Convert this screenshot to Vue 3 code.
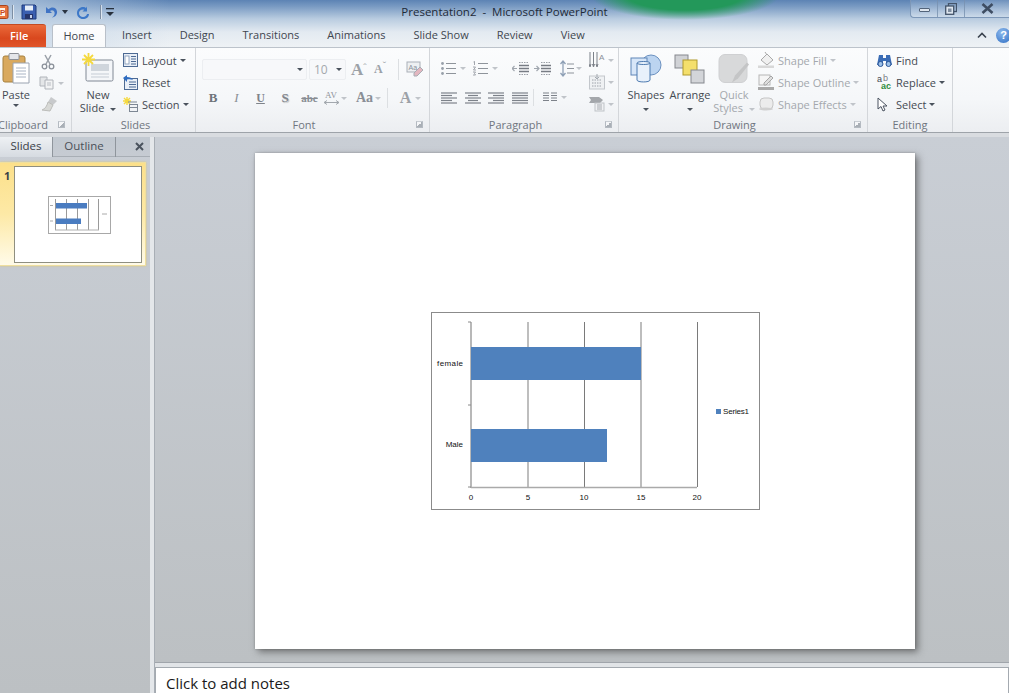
<script setup>
const tabs = ['Insert', 'Design', 'Transitions', 'Animations', 'Slide Show', 'Review', 'View']
const fontBtns = [
  { t: 'B', c: 'bold', w: 24 },
  { t: 'I', c: 'ital', w: 23 },
  { t: 'U', c: 'und', w: 25 },
  { t: 'S', c: 'shad', w: 24 },
  { t: 'abc', c: 'strike', w: 25 }
]
const alignRows = [
  [[0, 16], [0, 11], [0, 16], [0, 11], [0, 16]],
  [[0, 16], [3, 10], [0, 16], [3, 10], [0, 16]],
  [[0, 16], [5, 11], [0, 16], [5, 11], [0, 16]],
  [[0, 16], [0, 16], [0, 16], [0, 16], [0, 16]]
]
</script>

<template>
  <div class="app">
    <header class="chrome">
      <div class="titlebar">
        <div class="qat">
          <svg class="app-logo" width="9" height="14" viewBox="0 0 9 14"><rect x="-5" y="0.5" width="13" height="13" rx="1.5" fill="#e8743c" stroke="#a8441c"/><rect x="-3" y="3" width="8" height="8" fill="#fff3e4"/><text x="0" y="10" font-size="8" font-weight="700" fill="#c8481a" font-family="Liberation Sans">P</text></svg>
          <span class="qsep first"></span>
          <svg class="q-save" width="16" height="16" viewBox="0 0 16 16"><path d="M1 1h13l1 1v13H1z" fill="#3b5fb0" stroke="#1f3a7c"/><rect x="4" y="1.5" width="8" height="5" fill="#e6edf7"/><rect x="4" y="10" width="8" height="5" fill="#27356a"/><rect x="9" y="11" width="2" height="3" fill="#c6d2ea"/></svg>
          <svg class="q-undo" width="14" height="14" viewBox="0 0 14 14"><path d="M2 2v6h6L6 6c2-1.400 4-.6 4.600 1.400.4 1.800-.6 3.800-2.600 5.100 3.400-.6 5.400-3 5-6C12.500 2.500 8 1 4.500 4.200z" fill="#3f73c4"/></svg>
          <span class="q-caret"></span>
          <svg class="q-redo" width="14" height="14" viewBox="0 0 14 14"><path d="M11 1.500v5H6.500l1.800-1.800C5.500 3.800 3 5.500 3 8s2 4 4 4 4-1.500 4-3h2c0 3-2.600 5-6 5s-6-2.500-6-6 3-6 6-6c1.500 0 2.600.6 3 1z" fill="#3d78c8"/></svg>
          <span class="qsep"></span>
          <svg class="q-cust" width="8" height="10" viewBox="0 0 8 10"><rect y="1" width="8" height="1.300" fill="#27303c"/><path d="M0 5h8L4 9z" fill="#27303c"/></svg>
        </div>
        <div class="doc-title">Presentation2&nbsp; -&nbsp; Microsoft PowerPoint</div>
        <div class="win-btns">
          <span class="win-btn w-min"><i class="min-bar"></i></span>
          <span class="win-btn w-res">
            <svg width="12" height="12" viewBox="0 0 12 12"><rect x="3.500" y="0.500" width="8" height="8" fill="none" stroke="#43546a" stroke-width="1.300"/><rect x="0.700" y="3" width="8" height="8.300" fill="#dde5ee" stroke="#43546a" stroke-width="1.300"/><rect x="3" y="5.500" width="3.500" height="3.500" fill="#7e8da0"/></svg>
          </span>
          <span class="win-btn w-close">
            <svg width="13" height="11" viewBox="0 0 13 11"><path d="M1.500 1l10 9M11.500 1l-10 9" stroke="#3e4d62" stroke-width="2.600"/></svg>
          </span>
        </div>
      </div>
      <nav class="tabrow">
        <span class="file-tab">File</span>
        <span class="tab home">Home</span>
        <span v-for="t in tabs" :key="t" class="tab">{{ t }}</span>
        <span class="tab-right">
          <svg width="10" height="7" viewBox="0 0 10 7"><path d="M1 5.500l4-4 4 4" fill="none" stroke="#39424e" stroke-width="1.600"/></svg>
          <span class="help">?</span>
        </span>
      </nav>
    </header>

    <section class="ribbon">
      <!-- Clipboard -->
      <div class="group g-clip">
        <div class="g-body">
          <div class="big paste">
            <svg width="28" height="32" viewBox="0 0 28 32"><rect x="1" y="3" width="22" height="26" rx="2" fill="#d9a95e" stroke="#a7813f"/><rect x="7" y="0.500" width="10" height="6" rx="1" fill="#e4e6ea" stroke="#8b8f96"/><path d="M11 10h16v20H11z" fill="#fff" stroke="#9aa3b0"/><path d="M14 15h10M14 18h10M14 21h10M14 24h10" stroke="#a9b4c4"/></svg>
            <span class="big-label">Paste</span>
            <span class="caret solo"></span>
          </div>
          <div class="clip-tools">
            <svg width="14" height="16" viewBox="0 0 14 16"><path d="M4 1l5 9M10 1L5 10" stroke="#9aa0a8" stroke-width="1.500"/><circle cx="3.500" cy="12.500" r="2.300" fill="none" stroke="#8a9099" stroke-width="1.300"/><circle cx="10.500" cy="12.500" r="2.300" fill="none" stroke="#8a9099" stroke-width="1.300"/></svg>
            <span class="copy-row">
              <svg width="16" height="14" viewBox="0 0 16 14"><path d="M1 1h7v9H1z" fill="#e4e6e8" stroke="#b0b4ba"/><path d="M6 4h8v9H6z" fill="#f2f3f4" stroke="#b0b4ba"/><path d="M8 7h4M8 9h4" stroke="#b9bdc3"/></svg>
              <span class="caret pale"></span>
            </span>
            <svg width="17" height="16" viewBox="0 0 17 16"><path d="M10 1l6 4-4 4-5-3z" fill="#c8cacc"/><path d="M7 6l5 3-3 6-8-1c3-1 5-4 6-8z" fill="#d8d9d6" stroke="#bcbdba"/></svg>
          </div>
        </div>
        <div class="g-label clip-label"><span>Clipboard</span><i class="launcher"></i></div>
      </div>

      <!-- Slides -->
      <div class="group g-slides">
        <div class="g-body">
          <div class="big newslide">
            <svg width="32" height="32" viewBox="0 0 32 32"><rect x="4" y="7" width="27" height="21" rx="1.500" fill="#f4f6f9" stroke="#808894"/><rect x="9" y="11" width="18" height="7" fill="#cfd5dc"/><path d="M9 21h18M9 24h18" stroke="#c5ccd5"/><path d="M6.500 0v13M0 6.500h13M2 2l9 9M11 2l-9 9" stroke="#f5d93e" stroke-width="1.800"/></svg>
            <span class="big-label">New<br>Slide <i class="caret"></i></span>
          </div>
          <div class="small-col">
            <div class="sm">
              <svg width="15" height="14" viewBox="0 0 15 14"><rect x="0.500" y="0.500" width="14" height="13" fill="#e9eff7" stroke="#4d6a94"/><rect x="2" y="3" width="4" height="8" fill="#fff" stroke="#7e95b5" stroke-width=".8"/><path d="M8 3.500h5M8 6h5M8 8.500h5M8 11h5" stroke="#4d6a94"/></svg>
              <span>Layout</span><i class="caret"></i>
            </div>
            <div class="sm">
              <svg width="15" height="15" viewBox="0 0 15 15"><rect x="1.500" y="3.500" width="13" height="11" fill="#e9eff7" stroke="#4d6a94"/><path d="M6 7h7M6 9.500h7M6 12h7" stroke="#4d6a94"/><path d="M0 3l4-3v2c3 0 5 1 6 3-2-1-4-1-6-.5V7z" fill="#2f6cc0"/></svg>
              <span>Reset</span>
            </div>
            <div class="sm">
              <svg width="15" height="15" viewBox="0 0 15 15"><path d="M4 0v8M0 4h8M1 1l6 6M7 1L1 7" stroke="#f5d93e" stroke-width="1.400"/><path d="M5 5h9" stroke="#7d8794"/><rect x="6.500" y="7.500" width="8" height="7" fill="#f1f3f6" stroke="#7d8794"/><path d="M7 10.500h7" stroke="#7d8794"/></svg>
              <span>Section</span><i class="caret"></i>
            </div>
          </div>
        </div>
        <div class="g-label l-slides">Slides</div>
      </div>

      <!-- Font -->
      <div class="group g-font">
        <div class="g-body column">
          <div class="font-r1">
            <span class="combo fname"><i class="caret dark"></i></span>
            <span class="combo fsize"><em>10</em><i class="caret dark"></i></span>
            <span class="glyph grow">A<sup>ˆ</sup></span>
            <span class="glyph shrink">A<sup>ˇ</sup></span>
            <span class="vsep"></span>
            <svg class="clearfmt" width="18" height="17" viewBox="0 0 18 17"><rect x="1" y="1" width="13" height="10" fill="#eef0f2" stroke="#aab0b8"/><text x="2.500" y="8.500" font-size="7" fill="#8a909a" font-family="Liberation Sans">Aa</text><path d="M8 12l6-6 3 3-6 6H8z" fill="#e3b7c0" stroke="#a8adb4"/></svg>
          </div>
          <div class="font-r2">
            <span v-for="b in fontBtns" :key="b.t" class="fbtn" :class="b.c" :style="{ width: b.w + 'px' }">{{ b.t }}</span>
            <span class="av">AV<svg width="15" height="5" viewBox="0 0 15 5"><path d="M0 2.500h15M3 .5L0 2.500l3 2M12 .5l3 2-3 2" fill="none" stroke="#a3a8ae"/></svg></span>
            <i class="caret pale av-caret"></i>
            <span class="fbtn aa">Aa</span>
            <i class="caret pale"></i>
            <span class="vsep short"></span>
            <span class="fbtn colorA">A</span>
            <i class="caret pale"></i>
          </div>
        </div>
        <div class="g-label with-launcher">Font<i class="launcher abs"></i></div>
      </div>

      <!-- Paragraph -->
      <div class="group g-para">
        <div class="g-body para-body">
          <div class="para-main">
            <div class="para-r1">
              <svg class="pi" width="15" height="15" viewBox="0 0 15 15"><path d="M5 2.500h10M5 7.500h10M5 12.500h10" stroke="#8e949b" stroke-width="1.200"/><circle cx="1.500" cy="2.500" r="1.400" fill="#98a0aa"/><circle cx="1.500" cy="7.500" r="1.400" fill="#98a0aa"/><circle cx="1.500" cy="12.500" r="1.400" fill="#98a0aa"/></svg>
              <i class="caret pale c1"></i>
              <svg class="pi p2" width="15" height="15" viewBox="0 0 15 15"><path d="M5 2.500h10M5 7.500h10M5 12.500h10" stroke="#8e949b" stroke-width="1.200"/><path d="M0.500 1l1-.6v3.600M0 6h2.500l-2 3h2.500M0 11h2.500l-1 1.500 1 1.500H0" fill="none" stroke="#8b9199" stroke-width=".8"/></svg>
              <i class="caret pale c1"></i>
              <svg class="pi p3" width="17" height="15" viewBox="0 0 17 15"><path d="M7 1.500h10M7 13.500h10" stroke="#9a9fa6" stroke-dasharray="1.500 1"/><path d="M7 4.500h10M7 7.500h10M7 10.500h10" stroke="#777c84" stroke-width="1.300"/><path d="M5 7.500H0M2.500 5L0 7.500 2.500 10" fill="none" stroke="#a0a6ae" stroke-width="1.200"/></svg>
              <svg class="pi p4" width="17" height="15" viewBox="0 0 17 15"><path d="M7 1.500h10M7 13.500h10" stroke="#9a9fa6" stroke-dasharray="1.500 1"/><path d="M7 4.500h10M7 7.500h10M7 10.500h10" stroke="#777c84" stroke-width="1.300"/><path d="M0 7.500h5M2.500 5L5 7.500 2.500 10" fill="none" stroke="#a0a6ae" stroke-width="1.200"/></svg>
              <svg class="pi p5" width="14" height="17" viewBox="0 0 14 17"><path d="M3 1v15M0.500 4L3 1l2.500 3M0.500 13L3 16l2.500-3" fill="none" stroke="#8fa0b6" stroke-width="1.300"/><path d="M7 4h7M7 8.500h7M7 13h7" stroke="#8e949b" stroke-width="1.200"/></svg>
              <i class="caret pale c2"></i>
            </div>
            <div class="para-r2">
              <svg v-for="(r, i) in alignRows" :key="i" class="al" width="16" height="12" viewBox="0 0 16 12">
                <path v-for="(s, j) in r" :key="j" :d="`M${s[0]} ${1 + j * 2.500}h${s[1]}`" stroke="#7d828a" stroke-width="1.200"/>
              </svg>
              <span class="vsep shorter"></span>
              <svg class="cols" width="14" height="11" viewBox="0 0 14 11"><path d="M0 1h6M8 1h6M0 3.500h6M8 3.500h6M0 6h6M8 6h6M0 8.500h6M8 8.500h6" stroke="#7d828a" stroke-width="1.200"/></svg>
              <i class="caret pale c3"></i>
            </div>
          </div>
          <div class="para-side">
            <div class="ps">
              <svg width="16" height="16" viewBox="0 0 16 16"><path d="M1 0v14M4.500 0v14M8 0v14M.0 12l1 3 1-3M3.500 12l1 3 1-3M7 12l1 3 1-3" fill="none" stroke="#7d828a" stroke-width="1"/><text x="10" y="8" font-size="8" fill="#8a9099" font-family="Liberation Sans">A</text></svg>
              <i class="caret pale"></i>
            </div>
            <div class="ps">
              <svg width="16" height="16" viewBox="0 0 16 16"><rect x=".5" y="2" width="15" height="13" fill="#eff1f3" stroke="#c3c7cc"/><path d="M3 6h10M3 9h10M3 12h10" stroke="#9da2a9" stroke-dasharray="1.500 1"/><path d="M8 0v5M6 3l2 2 2-2" fill="none" stroke="#a4aab1"/></svg>
              <i class="caret pale"></i>
            </div>
            <div class="ps">
              <svg width="16" height="16" viewBox="0 0 16 16"><path d="M0 1h10l4 3-3 3H0l2-3z" fill="#a4a7ab"/><rect x="6" y="7" width="9" height="8" fill="#f0f1f3" stroke="#bfc3c7"/><path d="M8 9h5M8 11h5M8 13h5" stroke="#a9adb2"/></svg>
              <i class="caret pale"></i>
            </div>
          </div>
        </div>
        <div class="g-label with-launcher">Paragraph<i class="launcher abs"></i></div>
      </div>

      <!-- Drawing -->
      <div class="group g-draw">
        <div class="g-body">
          <div class="big shapes">
            <svg width="32" height="30" viewBox="0 0 32 30"><circle cx="21" cy="11" r="10" fill="#bcd4f0" stroke="#6a90c0"/><rect x="1" y="4" width="16" height="17" fill="#d7e6f8" stroke="#5f86b8"/><path d="M7 9c0-2 13-2 13 0v17c0 2.600-13 2.600-13 0z" fill="#e8f1fb" stroke="#4d7ab0"/><path d="M7 9c0 2 13 2 13 0" fill="none" stroke="#4d7ab0"/></svg>
            <span class="big-label">Shapes<br><i class="caret solo-line"></i></span>
          </div>
          <div class="big arrange">
            <svg width="32" height="30" viewBox="0 0 32 30"><rect x="1" y="1" width="13" height="13" fill="#d0d2d6" stroke="#85888e"/><rect x="9" y="6" width="14" height="15" fill="#f4df6c" stroke="#b09a2c"/><rect x="17" y="16" width="13" height="13" fill="#d3d5d9" stroke="#85888e"/></svg>
            <span class="big-label">Arrange<br><i class="caret solo-line"></i></span>
          </div>
          <div class="big quick">
            <svg width="32" height="31" viewBox="0 0 32 31"><rect x="1" y="1" width="28" height="28" rx="6" fill="#d8d9da" stroke="#cfd0d2"/><path d="M14 29l3-7 12-13 2 2-11 14z" fill="#c4c5c6"/></svg>
            <span class="big-label">Quick<br>Styles <i class="caret pale"></i></span>
          </div>
          <div class="small-col drawcol">
            <div class="sm off">
              <svg width="17" height="16" viewBox="0 0 17 16"><path d="M3 8l6-6 6 6-6 5z" fill="#f0f0f0" stroke="#a9a9a9"/><path d="M7 0l2 3" stroke="#a9a9a9"/><rect x="0" y="13.500" width="16" height="2.500" fill="#d8d8d8"/></svg>
              <span>Shape Fill</span><i class="caret pale"></i>
            </div>
            <div class="sm off">
              <svg width="17" height="16" viewBox="0 0 17 16"><rect x="1" y="1" width="11" height="10" fill="#f5f5f5" stroke="#b6b6b6"/><path d="M6 9l7-7 2 2-7 7H6z" fill="#dedede" stroke="#a6a6a6"/><rect y="13" width="16" height="3" fill="#a9a9a9"/></svg>
              <span>Shape Outline</span><i class="caret pale"></i>
            </div>
            <div class="sm off">
              <svg width="17" height="14" viewBox="0 0 17 14"><rect x="2" y="1" width="13" height="11" rx="4" fill="#ececec" stroke="#c5c5c5"/><ellipse cx="8" cy="12" rx="7" ry="1.500" fill="#d0d0d0"/></svg>
              <span>Shape Effects</span><i class="caret pale"></i>
            </div>
          </div>
        </div>
        <div class="g-label with-launcher">Drawing<i class="launcher abs"></i></div>
      </div>

      <!-- Editing -->
      <div class="group g-edit">
        <div class="g-body">
          <div class="small-col editcol">
            <div class="sm">
              <svg width="15" height="14" viewBox="0 0 15 14"><path d="M2 2h4v3h3V2h4l2 10H9V8H6v4H0z" fill="#3a6cb5"/><circle cx="3.500" cy="11" r="2.500" fill="#9cc0e8" stroke="#2b5596"/><circle cx="11.500" cy="11" r="2.500" fill="#9cc0e8" stroke="#2b5596"/></svg>
              <span>Find</span>
            </div>
            <div class="sm">
              <span class="repl"><b>a</b><b class="bb">b</b><b class="cc">ac</b></span>
              <span>Replace</span><i class="caret"></i>
            </div>
            <div class="sm">
              <svg width="15" height="15" viewBox="0 0 15 15"><path d="M1 1v11l3-2.500 2 4.500 2-1-2-4h4z" fill="#fff" stroke="#4a5360"/></svg>
              <span>Select</span><i class="caret"></i>
            </div>
          </div>
        </div>
        <div class="g-label">Editing</div>
      </div>
    </section>
    <div class="strip"></div>

    <main class="workspace">
      <aside class="sidebar">
        <div class="side-tabs">
          <span class="st active">Slides</span>
          <span class="st">Outline</span>
          <svg class="close" width="9" height="9" viewBox="0 0 9 9"><path d="M1 1l7 7M8 1L1 8" stroke="#4a535e" stroke-width="2"/></svg>
        </div>
        <div class="thumb-row">
          <span class="num">1</span>
          <div class="thumb">
            <svg width="63" height="38" viewBox="0 0 63 38">
              <rect x=".5" y=".5" width="62" height="37" fill="#fff" stroke="#a8a8a8"/>
              <path d="M7.500 3v31M18.500 3v31M29.500 3v31M40.500 3v31M50.500 3v31" stroke="#9a9a9a"/>
              <path d="M7 34h44" stroke="#b0b0b0"/>
              <rect x="8" y="7" width="31" height="5.500" fill="#4a7cc0"/>
              <rect x="8" y="22.500" width="25" height="5.500" fill="#4a7cc0"/>
              <path d="M2 9.500h3M2 25h3M54 18h5" stroke="#aaa"/>
            </svg>
          </div>
        </div>
      </aside>
      <div class="splitter"></div>
      <div class="editor">
        <div class="stage">
          <div class="slide">
            <svg class="chart" width="329" height="198" viewBox="0 0 329 198">
              <rect x=".5" y=".5" width="328" height="197" fill="#fff" stroke="#8b8b8b"/>
              <path d="M97 10v165" stroke="#a9a9a9" stroke-width="1.500"/>
              <path d="M153.500 10v165" stroke="#7a7a7a"/>
              <path d="M210 10v165" stroke="#bdbdbd" stroke-width="2"/>
              <path d="M266.500 10v165" stroke="#7a7a7a"/>
              <path d="M40 10v166" stroke="#a0a0a0" stroke-width="1.500"/>
              <path d="M37 10h3M37 93h3M37 175h3" stroke="#8a8a8a" fill="none"/>
              <rect x="40" y="35" width="170" height="33" fill="#4f81bd"/>
              <rect x="40" y="117" width="136" height="33" fill="#4f81bd"/>
              <path d="M40 175.500h226" stroke="#aaa" stroke-width="1.500"/>
              <g class="ctext">
                <text x="32" y="54" text-anchor="end" textLength="26" lengthAdjust="spacing">female</text>
                <text x="32" y="135" text-anchor="end">Male</text>
                <text x="40" y="188" text-anchor="middle">0</text>
                <text x="97" y="188" text-anchor="middle">5</text>
                <text x="153" y="188" text-anchor="middle">10</text>
                <text x="210" y="188" text-anchor="middle">15</text>
                <text x="266" y="188" text-anchor="middle">20</text>
                <text x="292" y="102" textLength="26" lengthAdjust="spacing">Series1</text>
              </g>
              <rect x="285" y="97" width="5" height="5" fill="#4f81bd"/>
            </svg>
          </div>
        </div>
        <div class="notes">Click to add notes</div>
      </div>
    </main>
  </div>
</template>

<style>
html, body { margin: 0; height: 100%; overflow: hidden; background: #c8ccd2; }
</style>

<style scoped>
.app { width: 1009px; height: 693px; display: flex; flex-direction: column; overflow: hidden; font-family: "Open Sans", "Noto Sans", sans-serif; color: #3b4048; font-size: 11px; }
.chrome { height: 47px; flex: none; display: flex; flex-direction: column;
  background:
    radial-gradient(ellipse 95px 26px at 685px -6px, #23985a 0%, #23985a 62%, rgba(47,156,88,0) 100%),
    linear-gradient(90deg, rgba(190,208,228,.75) 0, rgba(190,208,228,0) 170px),
    linear-gradient(180deg, #5c83b4 0%, #7a9bc3 14%, #b9cce0 40%, #e3eaf1 68%, #eef2f5 100%);
}
.titlebar { height: 24px; display: grid; grid-template-columns: 1fr auto 1fr; align-items: start; }
.qat { display: flex; align-items: center; height: 24px; padding-bottom: 1px; box-sizing: border-box; }
.app-logo { margin-right: 3px; }
.qsep { width: 1px; height: 14px; background: #7d8ea3; box-shadow: 1px 0 0 rgba(255,255,255,.6); margin: 0 4px; }
.qsep.first { margin: 0 8px 0 0; }
.q-undo { margin-left: 7px; }
.q-caret { width: 0; height: 0; border: 3px solid transparent; border-top: 4px solid #2a3442; border-bottom: 0; margin: 0 8px 0 4px; }
.q-redo { margin-right: 6px; }
.q-cust { margin-left: 1px; }
.doc-title { font-size: 11.500px; line-height: 23px; color: #1e2a38; white-space: nowrap; }
.win-btns { justify-self: end; display: flex; height: 18px; width: 99px; box-sizing: border-box; border: 1px solid #7d97b7; border-top: 0; border-right: 0; border-bottom-left-radius: 4px; background: linear-gradient(180deg, rgba(150,175,205,.3), rgba(225,235,245,.55)); }
.win-btn { display: flex; align-items: center; justify-content: center; box-sizing: border-box; }
.w-min, .w-res { width: 27px; border-right: 1px solid rgba(120,145,175,.8); }
.w-close { flex: 1; }
.min-bar { width: 11px; height: 4px; border-radius: 1px; background: #dfe6ee; border: 1px solid #53647a; box-sizing: border-box; margin-top: 3px; }

.tabrow { height: 23px; display: flex; align-items: stretch; }
.file-tab { width: 46px; box-sizing: border-box; padding-left: 10px; line-height: 22px; color: #fff; font-weight: 600; margin-right: 6px; background: linear-gradient(180deg, #ea6a3a, #d9481e 60%, #e0552a); border-radius: 0 3px 0 0; border-top: 1px solid #c24a22; }
.tab { padding: 0 14px; line-height: 22px; color: #3f464f; white-space: nowrap; }
.tab.home { width: 54px; box-sizing: border-box; padding: 0; text-align: center; background: linear-gradient(180deg, #fdfdfe, #f9fafb); border: 1px solid #b9c0c9; border-bottom: 0; border-radius: 3px 3px 0 0; line-height: 21px; margin-right: 2px; }
.tab-right { margin-left: auto; display: flex; align-items: center; gap: 9px; margin-right: -2px; margin-bottom: 1px; }
.help { width: 15px; height: 15px; border-radius: 50%; background: radial-gradient(circle at 40% 30%, #8cb8ec, #2e6ec4); color: #fff; font: 700 11px/15px "Liberation Sans", sans-serif; text-align: center; }

.ribbon { height: 86px; flex: none; display: flex; background: linear-gradient(180deg, #fbfcfd 0%, #f5f7f9 60%, #eceef1 100%); border-top: 1px solid #bcc3cb; border-bottom: 1px solid #9ea3a9; box-sizing: border-box; }
.group { display: flex; flex-direction: column; box-sizing: border-box; border-right: 1px solid #d3d6da; position: relative; flex: none; }
.g-clip { width: 72px; overflow: hidden; }
.g-slides { width: 124px; }
.g-font { width: 234px; }
.g-para { width: 189px; }
.g-draw { width: 249px; }
.g-edit { width: 85px; }
.g-body { flex: 1; display: flex; min-height: 0; }
.column { flex-direction: column; }
.g-label { height: 15px; line-height: 16px; text-align: center; color: #70767f; flex: none; position: relative; }
.with-launcher { padding-right: 17px; }
.l-slides { padding-left: 4px; }
.clip-label { display: flex; justify-content: space-between; align-items: center; padding-right: 6px; margin-left: -2px; }
.launcher { display: inline-block; width: 7px; height: 7px; border: 1px solid #b4bac1; border-top: 1px solid #c8cdd3; background: linear-gradient(135deg, #f5f6f8 50%, #a9afb6 50%); box-sizing: border-box; }
.launcher.abs { position: absolute; right: 6px; top: 4px; }

.caret { display: inline-block; width: 0; height: 0; border: 3px solid transparent; border-top: 3px solid #4a525c; border-bottom: 0; margin-left: 3px; vertical-align: middle; }
.caret.dark { border-top-color: #4a525c; }
.caret.pale { border-top-color: #c0c4c9; }
.caret.solo { margin: 3px 0 0 0; }
.caret.solo-line { margin: 0; }

.big { display: flex; flex-direction: column; align-items: center; flex: none; padding-top: 5px; box-sizing: border-box; }
.big svg { height: 32px; flex: none; }
.big-label { line-height: 13px; margin-top: 3px; text-align: center; white-space: nowrap; color: #444a52; }
.paste { width: 32px; }
.clip-tools { display: flex; flex-direction: column; align-items: flex-start; gap: 6px; padding: 6px 0 0 7px; }
.clip-tools > svg:first-child { margin-left: 2px; }
.copy-row { display: flex; align-items: center; }
.clip-tools > svg:last-child { margin-left: 2px; }

.newslide { width: 50px; margin-left: 1px; }
.small-col { display: flex; flex-direction: column; padding-top: 1px; }
.sm { height: 22px; display: flex; align-items: center; white-space: nowrap; color: #444a52; }
.sm > svg, .repl { width: 15px; margin-right: 4px; flex: none; }
.sm.off { color: #a4a8ad; }

.font-r1 { display: flex; align-items: center; padding: 10px 0 0 6px; height: 22px; }
.combo { height: 21px; box-sizing: border-box; background: #f7f8fa; border: 1px solid #eceef1; border-radius: 2px; display: flex; align-items: center; justify-content: flex-end; padding-right: 3px; }
.fname { width: 105px; }
.fsize { width: 37px; margin-left: 2px; justify-content: space-between; padding-left: 4px; color: #a4a8ad; font-size: 12px; }
.fsize em { font-style: normal; }
.glyph { font-family: "Liberation Serif", serif; font-weight: 700; color: #9ca1a7; white-space: nowrap; line-height: 1; }
.glyph sup { font-size: 10px; vertical-align: 4px; line-height: 0; font-weight: 400; }
.grow { font-size: 17px; margin-left: 5px; width: 21px; }
.shrink { font-size: 12px; width: 21px; padding-left: 2px; box-sizing: border-box; }
.vsep { width: 1px; height: 21px; background: #dcdfe2; margin: 0 7px 0 5px; flex: none; }
.vsep.short { margin: 0 11px 0 6px; height: 20px; }
.vsep.shorter { height: 17px; margin: 0 9px 0 -2px; }
.font-r2 { display: flex; align-items: center; padding: 7px 0 0 5px; height: 22px; font-family: "Liberation Serif", serif; color: #8f949b; }
.fbtn { display: inline-block; text-align: center; font-size: 13px; flex: none; }
.bold { font-weight: 700; color: #6e737a; }
.ital { font-style: italic; color: #8a8f96; }
.und { text-decoration: underline; font-weight: 700; color: #7e838a; font-size: 12px; }
.shad { font-weight: 700; color: #80858c; text-shadow: 1px 1px 1px #bbb; }
.strike { text-decoration: line-through; font-weight: 700; font-size: 11px; color: #888d93; }
.av { display: flex; flex-direction: column; align-items: center; font-size: 9px; line-height: 9px; color: #8f949b; margin-left: 1px; width: 16px; flex: none; }
.av-caret { margin-left: 2px; margin-right: 9px; }
.aa { font-weight: 700; font-size: 14px; color: #8a8f96; width: 16px; }
.colorA { font-weight: 700; font-size: 16px; color: #9ca1a7; width: 13px; }

.para-body { position: relative; }
.para-main { width: 158px; box-sizing: border-box; flex: none; padding: 12px 0 0 11px; display: flex; flex-direction: column; }
.para-r1 { display: flex; align-items: center; height: 17px; }
.c1 { margin-left: 4px; }
.c2 { margin-left: 2px; }
.p2 { margin-left: 7px; }
.p3 { margin-left: 14px; }
.p4 { margin-left: 5px; }
.p5 { margin-left: 9px; }
.para-r2 { display: flex; align-items: center; height: 17px; margin-top: 12px; gap: 0; }
.al { margin-right: 7.500px; flex: none; }
.cols { flex: none; }
.c3 { margin-left: 4px; }
.para-side { display: flex; flex-direction: column; padding: 1px 0 0 1px; }
.ps { height: 22px; display: flex; align-items: center; }

.shapes { width: 42px; margin-left: 6px; }
.arrange { width: 46px; }
.quick { width: 42px; color: #a4a8ad; }
.quick .big-label { color: #a4a8ad; }
.drawcol { margin-left: 3px; }
.drawcol .sm > svg { width: 17px; margin-right: 3px; }
.editcol { margin-left: 9px; }
.repl { position: relative; height: 15px; display: block; font: 400 9px/9px "Liberation Sans", sans-serif; color: #3f464f; }
.repl b { font-weight: 400; position: absolute; left: 0; top: 0; }
.repl .bb { left: 6px; top: -1px; color: #7b8087; }
.repl .cc { left: 4px; top: 7px; color: #2f8c3a; font-weight: 700; }

.strip { height: 4px; flex: none; background: #d9dce0; }
.workspace { flex: 1; display: flex; min-height: 0; background: #bcc0c3; }
.sidebar { width: 150px; flex: none; display: flex; flex-direction: column; background: linear-gradient(180deg, #c9ced5, #bcc0c3); }
.side-tabs { height: 20px; flex: none; display: flex; align-items: center; box-sizing: border-box; background: linear-gradient(180deg, #c2c9d1, #c6cbd2); border-bottom: 1px solid #a8aeb5; position: relative; }
.st { height: 20px; box-sizing: border-box; line-height: 18px; text-align: center; font-size: 11.500px; color: #4a5058; width: 63px; border-right: 1px solid #8f959c; }
.st.active { width: 53px; background: linear-gradient(180deg, #eef1f4, #d6dbe1); color: #3a4048; }
.close { margin-left: 19px; }
.thumb-row { margin: 5px 4px 0 0; height: 104px; box-sizing: border-box; display: flex; align-items: flex-start; padding: 3px; background: linear-gradient(180deg, #fce08a 0%, #fde9a6 50%, #fffbe9 100%); border: 1px solid #efdf9f; border-left: 0; box-shadow: 0 0 2px #d9c67a; }
.num { width: 10px; padding-left: 1px; font: 700 11px/14px "Open Sans", sans-serif; margin-top: 3px; color: #3a3f46; flex: none; }
.thumb { width: 129px; height: 97px; box-sizing: border-box; background: #fff; border: 1px solid #8f8f80; display: flex; align-items: center; justify-content: center; padding-left: 3px; }
.splitter { width: 5px; flex: none; background: #e4e7ea; border-right: 1px solid #a8aeb5; box-sizing: border-box; }
.editor { flex: 1; min-width: 0; display: flex; flex-direction: column; background: #e1e4e7; }
.stage { flex: 1; min-height: 0; padding: 16px 0 0 100px; box-sizing: border-box; border-bottom: 1px solid #a0a5ab; background: linear-gradient(180deg, #c9ced5, #bcc0c3); }
.slide { width: 660px; height: 496px; background: #fff; box-shadow: 3px 3px 7px rgba(60,60,60,.6), 0 0 2px rgba(80,80,80,.4); position: relative; }
.chart { position: absolute; left: 176px; top: 159px; }
.ctext text { font: 8px "Liberation Sans", sans-serif; fill: #111; }
.notes { height: 26px; flex: none; margin-top: 4px; box-sizing: border-box; background: #fff; border: 1px solid #a4aab0; border-bottom: 0; padding: 4px 0 0 10px; font-size: 15px; line-height: 22px; color: #1a1a1a; white-space: nowrap; }
</style>
